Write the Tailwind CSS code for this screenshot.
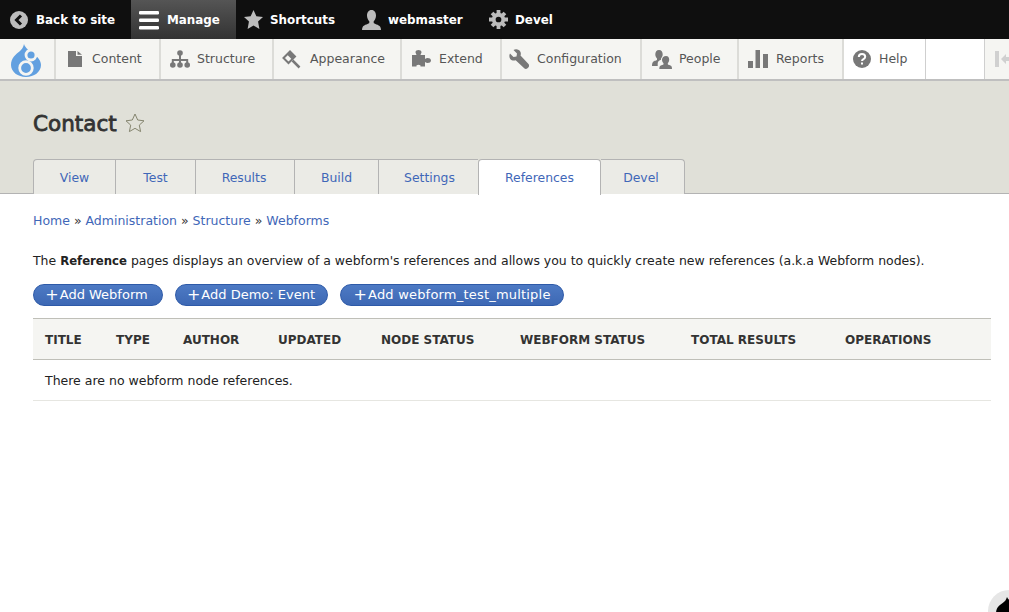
<!DOCTYPE html>
<html><head><meta charset="utf-8"><script src="https://cdn.jsdelivr.net/npm/@tailwindcss/browser@4"></script></head>
<body class="relative h-[612px] w-[1009px] overflow-hidden bg-white font-['DejaVu_Sans',sans-serif] text-[12.5px] text-[#222]">
<div class="flex h-[39px] bg-[#0f0f0f] text-[11.9px] font-bold text-white">
  <a class="flex w-[131px] items-center pl-[10px]"><svg class="mr-[8px] h-[18px] w-[18px]" viewBox="0 0 18 18"><circle cx="9" cy="9" r="9" fill="#bcbcbc"/><path d="M11 4.500 6.500 9l4.500 4.500" fill="none" stroke="#111" stroke-width="3"/></svg><span class="pt-[2px]">Back to site</span></a>
  <a class="flex w-[105px] items-center bg-gradient-to-b from-[#555] to-[#333] pl-[8px]"><svg class="mr-[8px] h-[20px] w-[20px]" viewBox="0 0 20 20"><rect y="1" width="20" height="3.500" rx="1.200" fill="#fff"/><rect y="8.500" width="20" height="3.500" rx="1.200" fill="#fff"/><rect y="16" width="20" height="3.500" rx="1.200" fill="#fff"/></svg><span class="pt-[2px]">Manage</span></a>
  <a class="flex w-[117px] items-center pl-[8px]"><svg class="mr-[7px] h-[19px] w-[19px]" viewBox="0 0 20 20"><path fill="#bcbcbc" d="m10 0 3 6.600 7 .8-5.200 4.800L16.200 20 10 16.300 3.800 20l1.400-7.800L0 7.400l7-.8z"/></svg><span class="pt-[2px]">Shortcuts</span></a>
  <a class="flex w-[136px] items-center pl-[9px]"><svg class="mr-[7px] h-[20px] w-[19px]" viewBox="0 0 19 20"><path fill="#bcbcbc" d="M9.500 0C12.500 0 14 2.500 14 5.500c0 2.500-1 4.500-2.300 5.700v1.500c0 1 5.300 2 6.500 4 .5.800.8 2 .8 3.300H0c0-1.300.3-2.500.8-3.300 1.200-2 6.500-3 6.500-4v-1.500C6 10 5 8 5 5.500 5 2.500 6.500 0 9.500 0z"/></svg><span class="pt-[2px]">webmaster</span></a>
  <a class="flex items-center"><svg class="mr-[7px] h-[19px] w-[19px]" viewBox="0 0 20 20"><g fill="#bcbcbc"><path fill-rule="evenodd" d="M10 3a7 7 0 1 0 0 14 7 7 0 0 0 0-14zm0 4a3 3 0 1 1 0 6 3 3 0 0 1 0-6z"/><path d="M8 0h4v4H8zM8 16h4v4H8zM0 8h4v4H0zM16 8h4v4h-4zM1.800 4.600l2.800-2.800 2.800 2.800-2.800 2.800zM12.600 15.400l2.800-2.800 2.800 2.800-2.800 2.800zM1.800 15.400l2.800-2.800 2.800 2.800-2.800 2.800zM12.600 4.600l2.800-2.800 2.800 2.800-2.800 2.800z"/></g></svg><span class="pt-[2px]">Devel</span></a>
</div>
<div class="flex h-[42px] border-b-2 border-[#bfbfbf] bg-[#f5f5f2] text-[12.5px] text-[#565656]">
  <a class="flex w-[56px] items-center justify-center border-r-2 border-[#dcdcd8] pt-[2px] pr-[2px]"><svg class="h-[33px] w-[30px]" viewBox="0 0 30 33"><path fill="#62a0e0" d="M13 0c1 4 6 7 10 10 4 3 7 7 7 11 0 7-7 12-15 12S0 28 0 21C0 14 5 10 9 7c2-2 3.500-4 4-7z"/><circle cx="20" cy="11" r="5" fill="#62a0e0" stroke="#f5f5f2" stroke-width="2.800"/><circle cx="15" cy="24" r="6.300" fill="#62a0e0" stroke="#f5f5f2" stroke-width="2.800"/></svg></a>
  <a class="flex w-[105px] items-center gap-[10px] border-r-2 border-[#dcdcd8] pl-[12px]"><svg class="h-[16px] w-[14px]" viewBox="0 0 14 16"><path fill="#787878" d="M0 0h8v5h6v11H0zM9.500 0 14 3.700H9.500z"/></svg>Content</a>
  <a class="flex w-[113px] items-center gap-[7px] border-r-2 border-[#dcdcd8] pl-[9px]"><svg class="h-[18px] w-[20px]" viewBox="0 0 20 18"><g fill="#787878"><circle cx="10" cy="3" r="2.800"/><circle cx="2.800" cy="15" r="2.800"/><circle cx="10" cy="15" r="2.800"/><circle cx="17.200" cy="15" r="2.800"/></g><path d="M10 3v12M2.800 15v-5h14.400v5" fill="none" stroke="#787878" stroke-width="2"/></svg>Structure</a>
  <a class="flex w-[128px] items-center gap-[8px] border-r-2 border-[#dcdcd8] pl-[8px]"><svg class="h-[19px] w-[19px]" viewBox="0 0 19 19"><path fill="none" stroke="#787878" stroke-width="2" d="M1.500 8 8 1.500l5 5L6.500 13z"/><path fill="#787878" d="M8 1.500 13 6.500 10 9.500 5 4.500z"/><path stroke="#787878" stroke-width="2.500" d="m10.500 10.500 7 7"/></svg><span class="pl-[1px]">Appearance</span></a>
  <a class="flex w-[100px] items-center gap-[8px] border-r-2 border-[#dcdcd8] pl-[9px]"><svg class="h-[18px] w-[20px]" viewBox="0 0 20 18"><path fill="#787878" d="M1 5h4.500C5 3.500 4.500 3 4.500 2 4.500.700 6 0 7.500 0S10.500.700 10.500 2c0 1-.5 1.500-1 3H14v4c1-.6 1.700-1 2.700-1 1.700 0 3.300.8 3.300 2.500S18.400 13 16.700 13c-1 0-1.700-.4-2.700-1v4.500H9.500c.4-1-.5-1.700-2-1.700s-2.400.7-2 1.700H1z"/></svg>Extend</a>
  <a class="flex w-[140px] items-center gap-[8px] border-r-2 border-[#dcdcd8] pl-[7px]"><svg class="h-[20px] w-[20px]" viewBox="0 0 20 20"><path fill="#787878" d="M1 4.500 4.500 8l3-.5.5-3L4.500 1C7-.5 10.500.5 11.500 3c.5 1.300.4 2.500 0 3.500l8 8.500c.8 1 .8 2.300 0 3.300l-1 1c-1 .9-2.400.9-3.300 0l-8.500-8c-2 .7-4.200.2-5.500-1.300C.2 8.500 0 6 1 4.500z"/></svg>Configuration</a>
  <a class="flex w-[97px] items-center gap-[7px] border-r-2 border-[#dcdcd8] pl-[10px]"><svg class="h-[19px] w-[20px]" viewBox="0 0 20 19"><path fill="#787878" d="M7 0c2.500 0 3.700 2 3.700 4.300 0 2-1 3.500-1.700 4.300v1.200c-1.500.5-3.300 1.300-3.300 3.700V16H0c0-1.500.2-3 1-4 1-1.300 4-1.500 4-2.200V8.600C4.200 7.800 3.300 6.300 3.300 4.300 3.300 2 4.500 0 7 0zM14 6c2.200 0 3.200 1.700 3.200 3.600 0 1.700-.7 3-1.400 3.700v1c0 .6 2.700.9 3.500 1.800.5.700.7 1.700.7 2.900H7.300c0-1.200.2-2.200.7-2.900.8-.9 3.500-1.200 3.500-1.800v-1c-.8-.7-1.500-2-1.500-3.700C10 7.700 11.800 6 14 6z"/></svg>People</a>
  <a class="flex w-[105px] items-center gap-[8px] border-r-2 border-[#dcdcd8] pl-[9px]"><svg class="h-[18px] w-[20px]" viewBox="0 0 20 18"><path fill="#787878" d="M0 11h5v7H0zM7.500 0H12v18H7.500zM15 4h5v14h-5z"/></svg>Reports</a>
  <a class="flex w-[82px] items-center gap-[8px] border-r border-[#cfcfcf] bg-white pl-[9px]"><svg class="h-[18px] w-[18px]" viewBox="0 0 18 18"><circle cx="9" cy="9" r="9" fill="#787878"/><path d="M5.800 7c0-2 1.400-3 3.200-3s3.200 1 3.200 2.800c0 2.400-3.200 2.200-3.200 4.300" fill="none" stroke="#fff" stroke-width="2"/><rect x="8" y="12.500" width="2" height="2" fill="#fff"/></svg>Help</a>
  <div class="w-[58px] bg-white"></div>
  <div class="flex min-w-0 flex-1 items-center overflow-hidden border-l border-[#cfcfcf] bg-[#f5f5f2] pl-[10px]"><svg class="h-[16px] w-[16px] shrink-0" viewBox="0 0 16 16"><path fill="#d0d0d0" d="M0 0h4v16H0zM6 8l5-5v3h5v4h-5v3z"/></svg></div>
</div>
<div class="h-[113px] border-b border-[#b3b3b3] bg-[#e0e0d8] pl-[33px]">
  <div class="flex h-[78px] items-center pt-[7px]"><h1 class="text-[21.500px] leading-[28px] font-normal text-[#333] [-webkit-text-stroke:0.8px_#333]">Contact</h1><svg class="mb-[1px] ml-[8px] h-[20px] w-[20px]" viewBox="0 0 20 20"><path fill="none" stroke="#85856f" d="m10 1 2.700 6 6.300.8-4.700 4.300 1.300 6.500L10 15.300l-5.600 3.300 1.300-6.500L1 7.800 7.300 7z"/></svg></div>
  <div class="flex h-[35px] text-center text-[12.4px] text-[#3f67b8]">
    <a class="flex w-[83px] items-center justify-center rounded-tl-[4px] border border-b-0 border-[#b3b3b3] bg-[#ebebe6] pt-[2px]">View</a>
    <a class="flex w-[80px] items-center justify-center border-t border-r border-[#b3b3b3] bg-[#ebebe6] pt-[2px]">Test</a>
    <a class="flex w-[99px] items-center justify-center border-t border-r border-[#b3b3b3] bg-[#ebebe6] pt-[2px] pr-[2px]">Results</a>
    <a class="flex w-[84px] items-center justify-center border-t border-r border-[#b3b3b3] bg-[#ebebe6] pt-[2px]">Build</a>
    <a class="flex w-[99px] items-center justify-center border-t border-[#b3b3b3] bg-[#ebebe6] pt-[2px] pl-[2px]">Settings</a>
    <a class="relative z-10 mb-[-1px] flex w-[123px] items-center justify-center rounded-t-[4px] border border-b-0 border-[#b3b3b3] bg-white pt-[2px]">References</a>
    <a class="flex w-[84px] items-center justify-center rounded-tr-[4px] border-t border-r border-[#b3b3b3] bg-[#ebebe6] pt-[2px] pr-[3px]">Devel</a>
  </div>
</div>
<main class="px-[33px] pr-[18px]">
  <nav class="mt-[19px] h-[16px] leading-[16px] text-[#3f67b8]">Home <span class="text-[#333]">»</span> Administration <span class="text-[#333]">»</span> Structure <span class="text-[#333]">»</span> Webforms</nav>
  <p class="mt-[24px] h-[16px] text-[12.470px] leading-[16px] whitespace-nowrap">The <b class="text-[11.700px]">Reference</b> pages displays an overview of a webform's references and allows you to quickly create new references (a.k.a Webform nodes).</p>
  <div class="mt-[15px] flex gap-[12px] text-[13px] leading-[20px] text-white">
    <a class="flex w-[130px] items-center justify-center rounded-full border border-[#2e5aa8] bg-gradient-to-b from-[#4d7ac4] to-[#3d68b4] pr-[3px]"><span class="mr-[1px] text-[16px] leading-[18px]">+</span>Add Webform</a>
    <a class="flex w-[153px] items-center justify-center rounded-full border border-[#2e5aa8] bg-gradient-to-b from-[#4d7ac4] to-[#3d68b4] pr-[1px]"><span class="mr-[1px] text-[16px] leading-[18px]">+</span>Add Demo: Event</a>
    <a class="flex w-[224px] items-center justify-center rounded-full border border-[#2e5aa8] bg-gradient-to-b from-[#4d7ac4] to-[#3d68b4] tracking-[0.2px]"><span class="mr-[1px] text-[16px] leading-[18px]">+</span>Add webform_test_multiple</a>
  </div>
  <table class="mt-[12px] w-full table-fixed text-left">
    <thead><tr class="h-[41px] border-y border-[#bfbfb8] bg-[#f5f5f2] text-[12px] font-bold text-[#333] uppercase">
      <th class="w-[71px] pt-[2px] pl-[12px]">Title</th><th class="w-[67px] pt-[2px] pl-[12px]">Type</th><th class="w-[95px] pt-[2px] pl-[12px]">Author</th><th class="w-[103px] pt-[2px] pl-[12px]">Updated</th><th class="w-[139px] pt-[2px] pl-[12px]">Node status</th><th class="w-[171px] pt-[2px] pl-[12px]">Webform status</th><th class="w-[154px] pt-[2px] pl-[12px]">Total results</th><th class="pt-[2px] pl-[12px]">Operations</th>
    </tr></thead>
    <tbody><tr class="h-[41px] border-b border-[#e6e6e1]"><td colspan="8" class="pt-[2px] pl-[12px]">There are no webform node references.</td></tr></tbody>
  </table>
</main>
<div class="absolute top-[590px] left-[988px] flex h-[42px] w-[42px] justify-center rounded-full bg-[#e6e6e6] pt-[7px]"><svg class="h-[24px] w-[26px]" viewBox="0 0 26 24"><path fill="#000" d="M11 0c1 3 5 4.500 8 7 3 2.500 7 5.500 7 9.500 0 6-6 7.500-13 7.500S0 22.500 0 16.500C0 11 3 8.500 6 6.500 9 4.500 10 3 11 0z"/></svg></div>
</body></html>
